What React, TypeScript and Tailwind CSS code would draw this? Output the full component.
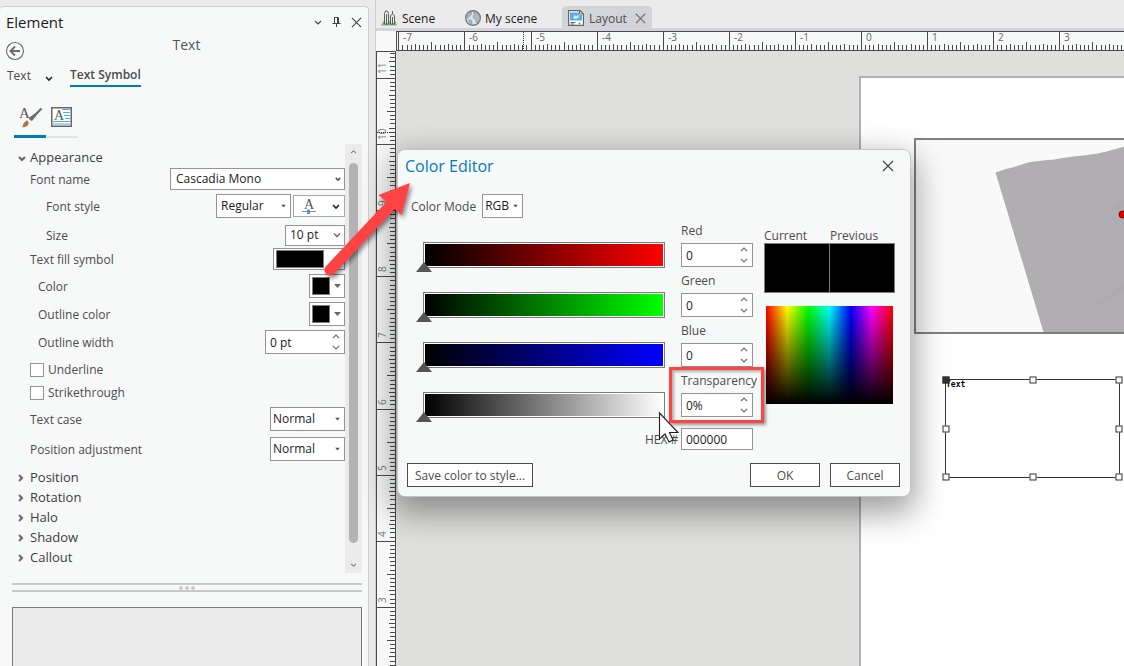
import React, { useState } from 'react';
import clsx from 'clsx';

/* ---------- Icons ---------- */

const CHEVRON_PATHS = {
  down: 'M1 1l3 3 3-3',
  up: 'M1 4l3-3 3 3',
  right: 'M1 1l3 3-3 3'
};

interface ChevronProps {
  direction?: 'down' | 'up' | 'right';
  weight?: number;
  className?: string;
}

const Chevron: React.FC<ChevronProps> = ({ direction = 'down', weight = 1.2, className }) => (
  <svg
    viewBox={direction === 'right' ? '0 0 5 8' : '0 0 8 5'}
    className={clsx('overflow-visible', className)}
    fill="none"
    stroke="currentColor"
    strokeWidth={weight}
    aria-hidden="true"
  >
    <path d={CHEVRON_PATHS[direction]} />
  </svg>
);

const CloseIcon: React.FC<{ className?: string }> = ({ className }) => (
  <svg viewBox="0 0 12 12" className={className} fill="none" stroke="currentColor" strokeWidth="1.2" aria-hidden="true">
    <path d="M1 1l10 10M11 1 1 11" />
  </svg>
);

const Triangle: React.FC<{ className?: string }> = ({ className }) => (
  <svg viewBox="0 0 7 4" className={className} fill="currentColor" aria-hidden="true">
    <path d="M0 0h7L3.5 4z" />
  </svg>
);

const PinIcon = () => (
  <svg width="9" height="12" viewBox="0 0 9 12" fill="none" stroke="#444" aria-hidden="true">
    <path d="M2.5 7V1.5h4V7M.5 7.5h8M4.5 8v3" />
    <path d="M5.7 1.5V7" strokeWidth="1.4" />
  </svg>
);

const BackIcon = () => (
  <svg width="20" height="20" viewBox="0 0 20 20" fill="none" stroke="#6a6a6a" aria-hidden="true">
    <circle cx="10" cy="10" r="8.5" strokeWidth="1.1" />
    <path d="M15 10H6M10 5.5 5.5 10l4.5 4.5" strokeWidth="1.9" />
  </svg>
);

const FormatIcon = () => (
  <svg width="24" height="24" viewBox="0 0 24 24" aria-hidden="true">
    <text x="0" y="13" fontSize="15" fill="#555" className="font-['Liberation_Serif',serif]">A</text>
    <path d="M22.5 4 13 16l-3.500-3z" fill="#6e6e6e" />
    <path d="M22.500 3.500 11 15" stroke="#6e6e6e" strokeWidth="2.2" />
    <path d="M8.500 15.500c-3 .5-3.500 3-4.500 4 0 1.200-.5 2-1 2.500 4 .8 6.500-1.200 6.800-4.500z" fill="#b07a40" />
  </svg>
);

const ParagraphIcon = () => (
  <svg width="21" height="20" viewBox="0 0 21 20" aria-hidden="true">
    <rect x=".75" y=".75" width="19.5" height="18.5" fill="#fff" stroke="#666" strokeWidth="1.5" />
    <path d="M11 2.500h8M12 5.500h7M13 8.500h6M14 11.500h5M2 14.500h17M2 17h17" stroke="#5aaade" />
    <text x="3" y="13" fontSize="14" fill="#555" className="font-['Liberation_Serif',serif]">A</text>
  </svg>
);

const LetterColorIcon = () => (
  <svg width="14" height="18" viewBox="0 0 14 18" aria-hidden="true">
    <text x="2" y="12" fontSize="14" fill="#555" className="font-['Liberation_Serif',serif]">A</text>
    <path d="M0 14.500h14" stroke="#8a8a8a" />
    <rect x="5" y="12.500" width="3" height="4.500" fill="#3fa0dc" />
  </svg>
);

const SceneIcon = () => (
  <svg width="16" height="16" viewBox="0 0 16 16" fill="none" stroke="#5c5c5c" aria-hidden="true">
    <path d="M0 15.500 2.500 11h12l1.500 4.500z" fill="#7db57d" stroke="none" />
    <path d="M3.500 14V3.500L4.500 1h2L7.500 3.500V14z" fill="#ececec" />
    <path d="M5.500 4v10" />
    <path d="M9.500 14V5.500L11.500 4l2 1.500V14zM11.500 4V1" fill="#ececec" />
    <path d="M11.500 7v7" />
  </svg>
);

const GlobeIcon = () => (
  <svg width="16" height="16" viewBox="0 0 16 16" aria-hidden="true">
    <circle cx="8" cy="8" r="7.3" fill="#cfe6f5" stroke="#777" strokeWidth="1.4" />
    <path d="M8.500 1.500 14 4.500l1 4-2 4.500-2-1-.5-3-2.500-1.500 1-3zM2.500 3.500l4-1.800-.5 3L3 8l-1.500-1zM3.500 9.500l3 1 .5 3.500-2-1z" fill="#b4b8bb" stroke="#85898c" strokeWidth=".6" />
  </svg>
);

const LayoutIcon = () => (
  <svg width="16" height="16" viewBox="0 0 16 16" aria-hidden="true">
    <path d="M.6.6H12l3.400 3.400v11.400H.6z" fill="#fff" stroke="#666" strokeWidth="1.2" />
    <path d="M11.500.6V4h4z" fill="#f2f2f2" stroke="#666" />
    <path d="M2 2.500h9V5h3v5.500H2z" fill="#5badde" />
    <path d="M5 8l1.500-3 2 1.500L10 4.500l1 2.500-3 2z" fill="#d9eefa" />
    <path d="M2.500 12.500h5M2.500 14h3.500" stroke="#666" />
    <path d="M11.500 12.500v2M10.500 13.500h2" stroke="#3f9bd5" />
  </svg>
);

/* ---------- Form controls ---------- */

interface SelectFieldProps {
  id: string;
  label: string;
  value: string;
  className?: string;
  padding?: string;
  arrow?: 'triangle' | 'small' | 'wide';
}

const SelectField: React.FC<SelectFieldProps> = ({ id, label, value, className, padding = 'pl-1', arrow = 'triangle' }) => (
  <div className={clsx('relative', className)}>
    <select
      id={id}
      aria-label={label}
      className={clsx('block w-full h-full appearance-none border border-[#949494] bg-white text-xs text-[#1c1c1c]', padding)}
    >
      <option>{value}</option>
    </select>
    {arrow === 'triangle' && (
      <Triangle className="pointer-events-none absolute right-[5px] top-1/2 w-[5px] h-[3px] -translate-y-1/2 text-[#555]" />
    )}
    {arrow === 'small' && (
      <Chevron weight={2} className="pointer-events-none absolute right-1 top-1/2 w-1.5 h-1 -translate-y-1/2 text-[#555]" />
    )}
    {arrow === 'wide' && (
      <Chevron weight={1.3} className="pointer-events-none absolute right-1 top-1/2 w-2 h-[5px] -translate-y-1/2 text-[#666]" />
    )}
  </div>
);

interface SpinnerProps {
  id: string;
  label?: string;
  value: string;
  onChange: (value: string) => void;
  className?: string;
}

const Spinner: React.FC<SpinnerProps> = ({ id, label, value, onChange, className }) => {
  const step = (by: number) => {
    const unit = value.replace(/^[\d.]+/, '');
    onChange(`${Math.max(0, (parseInt(value) || 0) + by)}${unit}`);
  };

  return (
    <div className={clsx('flex h-6 border border-[#949494] bg-white', className)}>
      <input
        id={id}
        type="text"
        aria-label={label}
        value={value}
        onChange={(e) => onChange(e.target.value)}
        className="min-w-0 flex-1 bg-transparent pl-1 pt-0.5 text-xs text-[#1c1c1c] outline-none"
      />
      <div className="flex w-[17px] flex-col items-center justify-between py-[3px]">
        <button type="button" aria-label="Increase" onClick={() => step(1)}>
          <Chevron direction="up" className="block w-2 h-[5px] text-[#707070]" />
        </button>
        <button type="button" aria-label="Decrease" onClick={() => step(-1)}>
          <Chevron className="block w-2 h-[5px] text-[#707070]" />
        </button>
      </div>
    </div>
  );
};

const SwatchButton: React.FC<{ label: string; className?: string; swatch: string }> = ({ label, className, swatch }) => (
  <button
    type="button"
    aria-label={label}
    className={clsx('flex items-center justify-between border border-[#949494] bg-white pl-0.5 pr-[3px]', className)}
  >
    <span className={clsx('h-[18px] border border-[#7c7c7c] bg-black', swatch)} />
    <Triangle className="w-[7px] h-1 text-[#666]" />
  </button>
);

/* ---------- Element pane ---------- */

interface RowProps {
  label: string;
  htmlFor?: string;
  className?: string;
  indent?: string;
  children: React.ReactNode;
}

const Row: React.FC<RowProps> = ({ label, htmlFor, className, indent = 'pl-[30px]', children }) => (
  <div className={clsx('flex items-center justify-between', indent, className)}>
    <label htmlFor={htmlFor} className="pt-0.5 text-xs text-[#4c4c4c]">{label}</label>
    <div className="flex items-center gap-0.5">{children}</div>
  </div>
);

const GROUPS = ['Position', 'Rotation', 'Halo', 'Shadow', 'Callout'];

const ElementPane = () => {
  const [outlineWidth, setOutlineWidth] = useState('0 pt');

  return (
    <aside className="mt-1.5 flex w-[369px] shrink-0 flex-col rounded-t border-t border-r border-[#cdced2] bg-[#f7f9f8]">
      <header className="flex h-[30px] items-center justify-between pl-1.5 pr-1.5">
        <h1 className="text-[15px] text-[#1c1c1c]">Element</h1>
        <div className="flex items-center gap-2.5 text-[#444]">
          <button type="button" aria-label="Pane options"><Chevron weight={1.2} className="block w-2 h-[5px]" /></button>
          <button type="button" aria-label="Auto hide"><PinIcon /></button>
          <button type="button" aria-label="Close pane"><CloseIcon className="block w-[11px] h-[11px]" /></button>
        </div>
      </header>

      <div className="grid h-[26px] grid-cols-[1fr_auto_1fr] pl-[5px]">
        <button type="button" aria-label="Back" className="w-5 pt-0.5"><BackIcon /></button>
        <h2 className="text-sm leading-4 text-[#555]">Text</h2>
      </div>

      <nav className="flex h-6 items-start pl-[7px]">
        <button type="button" className="flex h-6 w-[63px] items-center gap-3.5 pt-0.5 text-xs text-[#4c4c4c]">
          Text
          <Chevron weight={1.6} className="mt-1 w-2 h-[5px] text-[#222]" />
        </button>
        <button type="button" className="h-6 border-b-2 border-[#007ac2] pt-0.5 text-xs font-semibold text-[#4c4c4c]">
          Text Symbol
        </button>
      </nav>

      <div className="ml-3.5 mt-[18px] flex h-[33px]">
        <button type="button" aria-label="General" className="flex h-full w-8 items-start justify-center border-b-[3px] border-[#007ac2] pl-0.5">
          <FormatIcon />
        </button>
        <button type="button" aria-label="Formatting" className="flex h-full w-8 items-start justify-center border-b-2 border-[#e2e3e3] pt-0.5 pr-0.5">
          <ParagraphIcon />
        </button>
      </div>

      <div className="mt-1.5 flex h-[429px] shrink-0">
        <div className="min-w-0 flex-1 pt-1">
          <button type="button" className="flex h-5 items-center pl-[18px] text-[13px] font-medium text-[#3c3c3c]">
            <Chevron weight={2} className="mr-1 w-2 h-[5px] text-[#666]" />
            Appearance
          </button>

          <Row label="Font name" htmlFor="font-name" className="h-[22px]">
            <SelectField id="font-name" label="Font name" value="Cascadia Mono" arrow="small" padding="pl-[5px]" className="w-[175px] h-[22px]" />
          </Row>
          <Row label="Font style" htmlFor="font-style" indent="pl-[46px]" className="mt-1 h-6">
            <SelectField id="font-style" label="Font style" value="Regular" className="w-[75px] h-6" />
            <button type="button" aria-label="Letter color" className="flex h-[22px] w-[52px] items-center justify-between border border-[#a8a8a8] bg-white pl-2 pr-1">
              <LetterColorIcon />
              <Chevron weight={1.6} className="w-2 h-[5px] text-[#222]" />
            </button>
          </Row>
          <Row label="Size" htmlFor="font-size" indent="pl-[46px]" className="mt-1.5 h-[22px]">
            <SelectField id="font-size" label="Size" value="10 pt" arrow="wide" className="w-[60px] h-[21px]" />
          </Row>
          <Row label="Text fill symbol" className="mt-0.5 h-[22px]">
            <SwatchButton label="Text fill symbol" className="w-[72px] h-[22px]" swatch="w-12" />
          </Row>
          <Row label="Color" indent="pl-[38px]" className="mt-1 h-6">
            <SwatchButton label="Color" className="w-9 h-6" swatch="w-[18px]" />
          </Row>
          <Row label="Outline color" indent="pl-[38px]" className="mt-1 h-6">
            <SwatchButton label="Outline color" className="w-9 h-6" swatch="w-[18px]" />
          </Row>
          <Row label="Outline width" htmlFor="outline-width" indent="pl-[38px]" className="mt-1 h-6">
            <Spinner id="outline-width" value={outlineWidth} onChange={setOutlineWidth} className="w-20" />
          </Row>

          <div className="mt-1 flex flex-col pl-[30px] text-xs text-[#4c4c4c]">
            {['Underline', 'Strikethrough'].map((name) => (
              <label key={name} className="flex h-[23px] items-center gap-1">
                <input type="checkbox" className="h-3.5 w-3.5 appearance-none border border-[#949494] bg-white checked:bg-[#007ac2]" />
                {name}
              </label>
            ))}
          </div>

          <Row label="Text case" htmlFor="text-case" className="mt-[3px] h-6">
            <SelectField id="text-case" label="Text case" value="Normal" padding="pl-0.5" className="w-[75px] h-6" />
          </Row>
          <Row label="Position adjustment" htmlFor="position-adjustment" className="mt-1.5 h-6">
            <SelectField id="position-adjustment" label="Position adjustment" value="Normal" padding="pl-0.5" className="w-[75px] h-6" />
          </Row>

          <div className="mt-[7px]">
            {GROUPS.map((group) => (
              <button key={group} type="button" className="flex h-5 items-center pl-[18px] text-[13px] font-medium text-[#3c3c3c]">
                <Chevron direction="right" weight={2} className="mr-[7px] w-[5px] h-2 text-[#666]" />
                {group}
              </button>
            ))}
          </div>
        </div>

        <div className="mr-1.5 flex w-[17px] flex-col items-center bg-[#ebebeb] py-1.5">
          <Chevron direction="up" className="w-[7px] h-1 shrink-0 text-[#444]" />
          <div className="mb-5 mt-[9px] w-[9px] flex-1 rounded-full bg-[#b3b3b3]" />
          <Chevron className="w-[7px] h-1 shrink-0 text-[#444]" />
        </div>
      </div>

      <div className="mr-1.5 ml-3 mt-2.5 flex h-[9px] shrink-0 items-center justify-center gap-0.5 border-y-2 border-[#c9c9c9]">
        {[0, 1, 2].map((dot) => (
          <span key={dot} className="h-1 w-1 rounded-full bg-[#cacaca]" />
        ))}
      </div>

      <div className="ml-3 mr-1.5 mt-[15px] min-h-0 flex-1 border border-b-0 border-[#7c7c7c] bg-[#ebebeb]" />
    </aside>
  );
};

/* ---------- Rulers and page ---------- */

const UNIT = 66.1;

const tickLength = (i: number) => {
  if (i % 16 === 0) return 20;
  if (i % 8 === 0) return 9;
  if (i % 4 === 0) return 7;
  return 6;
};

const HorizontalRuler = () => {
  const ticks = Array.from({ length: 16 * 20 + 1 }, (_, i) => i);
  return (
    <svg className="block h-5 w-full border-y border-l border-[#4a4a4a] bg-[#f7f9f8]" aria-hidden="true">
      {ticks.map((i) => {
        const x = Math.round(464 + ((i - 112) * UNIT) / 16);
        return <rect key={i} x={x} y={18 - Math.min(18, tickLength(i) - 1)} width="1" height="20" fill="#4a4a4a" />;
      })}
      {Array.from({ length: 11 }, (_, i) => i - 7).map((n) => (
        <text key={n} x={Math.round(464 + n * UNIT) + 5} y="9" fontSize="10" fill="#666">{n}</text>
      ))}
      <path d="M126.5 0v20" stroke="#333" strokeDasharray="1 1" />
    </svg>
  );
};

const VerticalRuler = () => {
  const ticks = Array.from({ length: 16 * 14 }, (_, i) => i);
  return (
    <svg className="block h-full w-5 border-x border-t border-[#4a4a4a] bg-[#f7f9f8]" aria-hidden="true">
      {ticks.map((i) => {
        const y = Math.round(26 + ((i - 16) * UNIT) / 16);
        return <rect key={i} x={18 - Math.min(18, tickLength(i) - 1)} y={y} width="20" height="1" fill="#4a4a4a" />;
      })}
      {Array.from({ length: 9 }, (_, i) => i).map((i) => {
        const y = Math.round(26 + i * UNIT) - 4;
        return (
          <text key={i} fontSize="10" fill="#777" transform={`translate(9 ${y}) rotate(-90)`}>{11 - i}</text>
        );
      })}
      <path d="M0 80.5h18" stroke="#333" strokeDasharray="1 1" />
    </svg>
  );
};

const HANDLES = [
  'left-0 top-0 bg-[#333]',
  'left-1/2 top-0 bg-white',
  'left-full top-0 bg-white',
  'left-0 top-1/2 bg-white',
  'left-full top-1/2 bg-white',
  'left-0 top-full bg-white',
  'left-1/2 top-full bg-white',
  'left-full top-full bg-white'
];

const LayoutCanvas = () => (
  <div className="relative min-w-0 overflow-hidden bg-[#dfdfde]">
    <div className="absolute left-[463px] top-[25px] right-0 bottom-0 border-l-2 border-t-2 border-[#b0b0b0] bg-white">
      {/* Map frame */}
      <div className="absolute left-[53px] top-[60px] h-[196px] w-[320px] border-2 border-[#808080] bg-[#f9f9f9]">
        <svg width="320" height="192" viewBox="0 0 320 192" aria-hidden="true">
          <path d="M79.500 32.500C88 29 96 28 104 25c13-5 24-4 37-6 15-3 28-3 43-6 14-3 22-7 36-8l100-20v212H129z" fill="#b0aeb1" />
          <path d="M160 174c14-8 30-14 38-24l12-6v6c-12 10-30 16-50 24zM190 72c10-4 16-12 22-14v6c-6 6-14 8-22 8z" fill="#a6a4a7" opacity=".3" />
          <circle cx="206.5" cy="74.5" r="3.5" fill="#e00000" stroke="#700" />
        </svg>
      </div>

      {/* Selected text element */}
      <div className="absolute left-[84px] top-[301px] h-[99px] w-[175px] border border-[#333] font-['DejaVu_Sans_Mono',monospace] text-[8px] leading-[10px] text-black">
        <span className="font-semibold">Text</span>
        {HANDLES.map((handle) => (
          <span key={handle} className={clsx('absolute h-[7px] w-[7px] -translate-x-1/2 -translate-y-1/2 border border-[#333]', handle)} />
        ))}
      </div>
    </div>
  </div>
);

const Workspace = () => (
  <main className="ml-1.5 flex min-w-0 flex-1 flex-col border-l border-[#cdced2]">
    <div className="flex h-7 shrink-0 items-end text-xs text-[#1c1c1c]">
      <button type="button" className="flex h-[22px] w-[83px] items-center gap-[5px] pl-[5px] pt-0.5">
        <SceneIcon />
        <span className="pt-0.5">Scene</span>
      </button>
      <button type="button" className="flex h-[22px] w-[103px] items-center gap-1 pl-1.5 pt-0.5">
        <GlobeIcon />
        <span className="pt-0.5">My scene</span>
      </button>
      <div className="flex h-[22px] items-center gap-2 rounded-t bg-[#d2d4d9] px-1.5 pt-0.5 text-[#4c4c4c]">
        <button type="button" className="flex items-center gap-[5px]">
          <LayoutIcon />
          <span className="pt-0.5">Layout</span>
        </button>
        <button type="button" aria-label="Close Layout"><CloseIcon className="block w-[11px] h-[11px] text-[#666]" /></button>
      </div>
    </div>
    <div className="h-[3px] shrink-0 bg-[#d2d4d9]" />
    <div className="grid min-h-0 flex-1 grid-cols-[20px_1fr] grid-rows-[20px_1fr]">
      <div className="bg-[#f7f9f8]" />
      <HorizontalRuler />
      <VerticalRuler />
      <LayoutCanvas />
    </div>
  </main>
);

/* ---------- Color editor ---------- */

const CHANNELS = [
  { name: 'Red', bar: 'bg-linear-to-r/srgb from-black to-[#ff0000]' },
  { name: 'Green', bar: 'bg-linear-to-r/srgb from-black to-[#00ff00]' },
  { name: 'Blue', bar: 'bg-linear-to-r/srgb from-black to-[#0000ff]' },
  { name: 'Transparency', bar: 'bg-linear-to-r/srgb from-black to-white' }
];

const ColorEditor = () => {
  const [values, setValues] = useState(['0', '0', '0', '0%']);
  const [hex, setHex] = useState('000000');

  const setValue = (index: number, value: string) => {
    setValues(prev => prev.map((v, i) => (i === index ? value : v)));
  };

  return (
    <section
      role="dialog"
      aria-labelledby="color-editor-title"
      className="absolute left-[397px] top-[149px] w-[514px] rounded-lg border border-[#c3c4c8] bg-[#f7f9f8] pb-[9px] text-xs text-[#4c4c4c] shadow-[0_12px_32px_4px_rgba(0,0,0,0.38)]"
    >
      <header className="flex h-8 items-center justify-between pl-[7px] pr-4">
        <h2 id="color-editor-title" className="text-base text-[#007ac2]">Color Editor</h2>
        <button type="button" aria-label="Close"><CloseIcon className="block w-3 h-3 text-[#444]" /></button>
      </header>

      <div className="mt-3 flex h-6 items-center gap-1.5 pl-[13px]">
        <label htmlFor="color-mode" className="pt-0.5">Color Mode</label>
        <SelectField id="color-mode" label="Color Mode" value="RGB" padding="pl-0.5" className="w-[41px] h-6" />
      </div>

      <div className="flex pl-[25px]">
        <div className="flex w-[242px] flex-col gap-6 pt-6">
          {CHANNELS.map((channel, i) => (
            <div key={channel.name} className="relative h-[26px] border border-[#7c7c7c] bg-white p-px">
              <div className={clsx('h-full', channel.bar)} />
              <input
                type="range"
                min="0"
                max={i === 3 ? 100 : 255}
                aria-label={`${channel.name} slider`}
                value={parseInt(values[i]) || 0}
                onChange={(e) => setValue(i, i === 3 ? `${e.target.value}%` : e.target.value)}
                className="absolute -left-2 -bottom-[5px] h-2.5 w-[256px] appearance-none bg-transparent [&::-webkit-slider-thumb]:h-2.5 [&::-webkit-slider-thumb]:w-4 [&::-webkit-slider-thumb]:appearance-none [&::-webkit-slider-thumb]:bg-[#555] [&::-webkit-slider-thumb]:[clip-path:polygon(50%_0,100%_100%,0_100%)]"
              />
            </div>
          ))}
        </div>

        <div className="ml-4 flex w-[72px] flex-col gap-1.5 pt-[5px]">
          {CHANNELS.map((channel, i) => (
            <div key={channel.name} className="flex flex-col gap-1">
              <label htmlFor={`value-${channel.name}`} className="h-4 leading-4">{channel.name}</label>
              <Spinner id={`value-${channel.name}`} value={values[i]} onChange={(v) => setValue(i, v)} />
            </div>
          ))}
        </div>

        <div className="ml-[11px] w-[131px] pt-2.5">
          <div className="flex h-[15px] leading-4">
            <span className="w-[66px]">Current</span>
            <span>Previous</span>
          </div>
          <div className="flex h-[50px] border border-[#7c7c7c] bg-black">
            <div className="w-[65px] border-r border-[#7c7c7c]" />
          </div>
          <div className="mx-0.5 mt-[13px] h-[98px] bg-[linear-gradient(to_bottom,transparent,#000),linear-gradient(to_right,#f00,#ff0,#0f0,#0ff,#00f,#f0f,#f00)]" />
        </div>
      </div>

      <div className="mt-2.5 flex h-[22px] items-center pl-[247px]">
        <label htmlFor="hex-value" className="w-9 pt-0.5">HEX #</label>
        <input
          id="hex-value"
          type="text"
          value={hex}
          onChange={(e) => setHex(e.target.value)}
          className="h-[22px] w-[72px] border border-[#949494] bg-white pl-1 text-[#1c1c1c]"
        />
      </div>

      <footer className="mt-[13px] flex gap-2.5 pl-[9px] pr-2.5">
        <button type="button" className="mr-auto h-6 w-[126px] border border-[#4c4c4c] bg-white pt-0.5">Save color to style...</button>
        <button type="button" className="h-6 w-[70px] border border-[#4c4c4c] bg-white pt-0.5">OK</button>
        <button type="button" className="h-6 w-[70px] border border-[#4c4c4c] bg-white pt-0.5">Cancel</button>
      </footer>
    </section>
  );
};

/* ---------- Callouts drawn over the window ---------- */

const Annotations = () => (
  <div className="pointer-events-none absolute inset-0">
    <svg className="absolute left-[320px] top-[175px] drop-shadow-[2px_3px_2px_rgba(0,0,0,0.45)]" width="100" height="110" viewBox="0 0 100 110" aria-hidden="true">
      <path d="M10 95 70 31" stroke="#ff4343" strokeWidth="11" strokeLinecap="round" />
      <path d="M90 8 58.5 20 81.5 40z" fill="#ff4343" />
    </svg>
    <div className="absolute left-[669px] top-[367px] h-14 w-[95px] border-[3px] border-[#ff4343] shadow-[2px_2px_3px_rgba(0,0,0,0.4),inset_2px_2px_3px_rgba(0,0,0,0.3)]" />
    <svg className="absolute left-[658px] top-[411px]" width="22" height="34" viewBox="0 0 22 34" aria-hidden="true">
      <path d="M1.500 2v26l5.500-5 4 8 4-2-3.500-7.500h8.500z" fill="#fff" stroke="#222" strokeWidth="1.1" />
    </svg>
  </div>
);

export default function App() {
  return (
    <div className="relative flex h-screen overflow-hidden bg-[#ebebeb] font-['Open_Sans','Noto_Sans',sans-serif]">
      <ElementPane />
      <Workspace />
      <ColorEditor />
      <Annotations />
    </div>
  );
}
